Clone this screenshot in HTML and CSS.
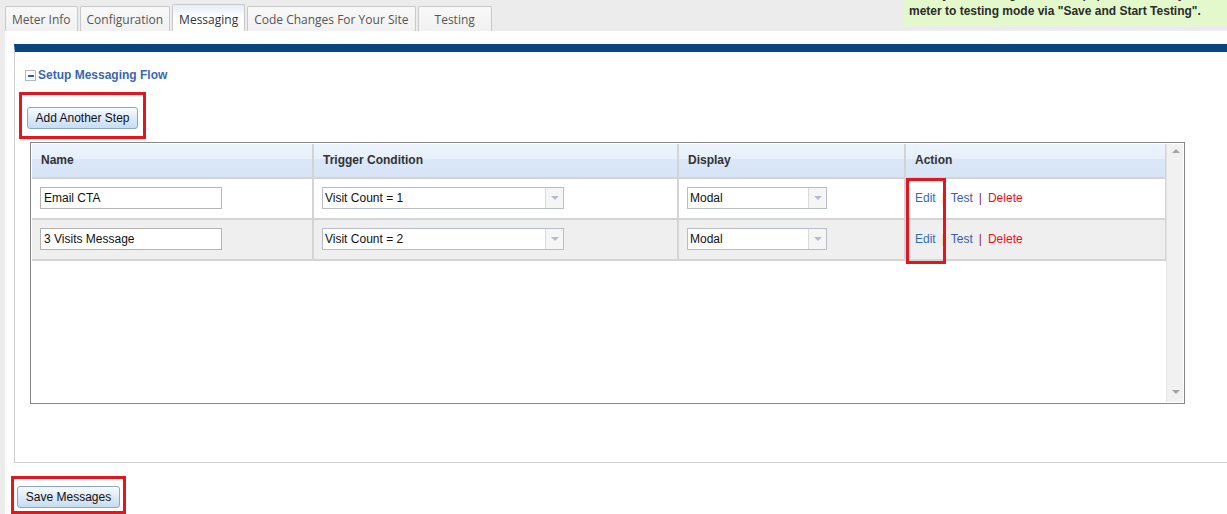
FILE: index.html
```html
<!DOCTYPE html>
<html lang="en">
<head>
<meta charset="utf-8">
<link rel="stylesheet" href="styles.css">
<title>Messaging</title>
</head>
<body>
<div id="top">
  <ul class="tabs">
    <li>Meter Info</li>
    <li>Configuration</li>
    <li class="active">Messaging</li>
    <li>Code Changes For Your Site</li>
    <li class="wide">Testing</li>
  </ul>
  <div class="note">
    Once your messages are set up, please switch your<br>
    meter to testing mode via "Save and Start Testing".
  </div>
</div>
<div id="panel">
  <div class="box">
    <div class="section-title"><span class="toggle"></span>Setup Messaging Flow</div>
    <div class="mark mark-add"><button class="btn">Add Another Step</button></div>
    <div class="grid">
      <div class="grid-body">
        <table>
          <colgroup>
            <col class="c-name"><col class="c-trigger"><col class="c-display"><col class="c-action">
          </colgroup>
          <tr>
            <th>Name</th>
            <th>Trigger Condition</th>
            <th>Display</th>
            <th>Action</th>
          </tr>
          <tr>
            <td><input class="text" type="text" value="Email CTA"></td>
            <td><div class="select s-trigger"><span>Visit Count = 1</span><i></i></div></td>
            <td><div class="select s-display"><span>Modal</span><i></i></div></td>
            <td class="actions"><a class="edit">Edit</a><span class="sep sep1">|</span><a class="test">Test</a><span class="sep sep2">|</span><a class="del">Delete</a></td>
          </tr>
          <tr class="alt">
            <td><input class="text" type="text" value="3 Visits Message"></td>
            <td><div class="select s-trigger"><span>Visit Count = 2</span><i></i></div></td>
            <td><div class="select s-display"><span>Modal</span><i></i></div></td>
            <td class="actions"><a class="edit">Edit</a><span class="sep sep1">|</span><a class="test">Test</a><span class="sep sep2">|</span><a class="del">Delete</a></td>
          </tr>
        </table>
      </div>
      <div class="scrollbar"><span class="up"></span><span class="down"></span></div>
      <div class="mark-edit"></div>
    </div>
  </div>
  <div class="mark mark-save"><button class="btn">Save Messages</button></div>
</div>
</body>
</html>
```

FILE: styles.css
```css
html, body {
  margin: 0;
  padding: 0;
  height: 100%;
}
body {
  background: #ececec;
  font-family: "Liberation Sans", Arial, sans-serif;
  font-size: 12px;
  color: #222;
  display: flex;
  flex-direction: column;
  overflow: hidden;
}

/* tabs + note */
#top {
  display: flex;
  justify-content: space-between;
  align-items: flex-start;
  height: 31px;
}
.tabs {
  list-style: none;
  margin: 0;
  padding: 0 0 0 5px;
  display: flex;
  align-items: flex-end;
  gap: 2px;
  height: 31px;
}
.tabs li {
  height: 24px;
  line-height: 26px;
  padding: 0 6px;
  border: 1px solid #c8c8c8;
  border-bottom: none;
  border-radius: 2px 2px 0 0;
  background: linear-gradient(#f8f8f8, #f1f1f1);
  font-family: "Open Sans", sans-serif;
  font-size: 12px;
  color: #555;
}
.tabs li.wide { padding: 0 16px; }
.tabs li.active {
  height: 26px;
  line-height: 29px;
  background: linear-gradient(#e4edf9, #fff 12px);
  color: #333;
}
.note {
  margin-top: -14px;
  width: 318px;
  padding: 0 0 6px 5px;
  background: #e3f8cb;
  font-weight: bold;
  line-height: 17px;
  color: #2b2b2b;
}

/* panel */
#panel {
  flex: 1;
  margin-left: 5px;
  background: #fff;
  padding-top: 13px;
}
.box {
  margin-left: 9px;
  border-top: 8px solid #08457e;
  border-left: 1px solid #cfcfcf;
  border-bottom: 1px solid #cfcfcf;
  padding: 16px 0 58px 0;
}
.section-title {
  display: flex;
  align-items: center;
  height: 14px;
  margin-left: 10px;
  font-weight: bold;
  color: #3a66b3;
}
.toggle {
  position: relative;
  width: 9px;
  height: 9px;
  border: 1px solid #b5b5b5;
  margin-right: 2px;
  background: #fff;
}
.toggle::after {
  content: "";
  position: absolute;
  left: 2px;
  top: 4px;
  width: 6px;
  height: 2px;
  background: #2c5fb5;
}

.mark {
  display: inline-block;
  border: 3px solid #e2161e;
}
.mark-add {
  margin: 10px 0 0 4px;
  padding: 12px 5px 7px 5px;
}
.mark-save {
  margin: 13px 0 0 6px;
  padding: 7px 3px 3px 3px;
}
.btn {
  display: block;
  height: 22px;
  padding: 0 4px;
  white-space: nowrap;
  border: 1px solid #8aa7c9;
  border-radius: 3px;
  background: linear-gradient(#f7fbff, #dbe9f8 55%, #c7ddf3);
  font-family: "Liberation Sans", Arial, sans-serif;
  font-size: 12px;
  color: #111;
}
.mark-add .btn { width: 111px; }
.mark-save .btn { width: 103px; }

/* grid */
.grid {
  position: relative;
  display: flex;
  margin: 3px 0 0 15px;
  width: 1151px;
  height: 258px;
  padding: 1px;
  border: 1px solid #888;
}
.grid-body {
  width: 1134px;
  background: #fff;
}
table {
  width: 1134px;
  table-layout: fixed;
  border-collapse: collapse;
}
.c-name { width: 281px; }
.c-trigger { width: 365px; }
.c-display { width: 227px; }
.c-action { width: 261px; }
th {
  height: 32px;
  padding: 0 0 1px 9px;
  text-align: left;
  font-weight: bold;
  color: #333;
  background: linear-gradient(#ecf3fc, #e7f0fb 44%, #d9e7f8 44%, #d7e5f7);
  border-right: 2px solid #d4d4d4;
  border-bottom: 2px solid #d4d4d4;
}
td {
  height: 37px;
  padding: 0 0 2px 8px;
  border-right: 2px solid #d4d4d4;
  border-bottom: 2px solid #d4d4d4;
}
tr.alt td { background: #efefef; }
input.text {
  display: block;
  box-sizing: border-box;
  width: 182px;
  height: 22px;
  margin: 0;
  padding: 0 3px;
  border: 1px solid #b5b5b5;
  font-family: "Liberation Sans", Arial, sans-serif;
  font-size: 12px;
  color: #111;
}
.select {
  box-sizing: border-box;
  display: flex;
  height: 22px;
  border: 1px solid #b9bdc8;
  background: #fff;
  color: #111;
}
.s-trigger { width: 242px; }
.s-display { width: 140px; }
.select span {
  flex: 1;
  line-height: 20px;
  padding-left: 2px;
}
.select i {
  position: relative;
  width: 17px;
  border-left: 1px solid #dadada;
  background: #f5f5f5;
}
.select i::after {
  content: "";
  position: absolute;
  left: 5px;
  top: 8px;
  border-left: 4px solid transparent;
  border-right: 4px solid transparent;
  border-top: 4px solid #b4bccb;
}
td.actions { padding-left: 9px; }
.actions a { cursor: pointer; }
.edit { color: #2f6db7; }
.test { color: #3a5ca8; }
.del { color: #e8121c; }
.sep { margin: 0 6px; }
.sep1 { color: #999; }
.sep2 { color: #8a2740; }

.scrollbar {
  position: relative;
  width: 17px;
  background: #f1f1f1;
  border-left: 1px solid #e2e2e2;
}
.scrollbar .up, .scrollbar .down {
  position: absolute;
  left: 5px;
  border-left: 4px solid transparent;
  border-right: 4px solid transparent;
}
.scrollbar .up {
  top: 5px;
  border-bottom: 4px solid #a3a3a3;
}
.scrollbar .down {
  bottom: 8px;
  border-top: 4px solid #a3a3a3;
}

/* annotation over the Edit links */
.mark-edit {
  position: absolute;
  left: 875px;
  top: 35px;
  width: 34px;
  height: 80px;
  border: 3px solid #e2161e;
}
```
